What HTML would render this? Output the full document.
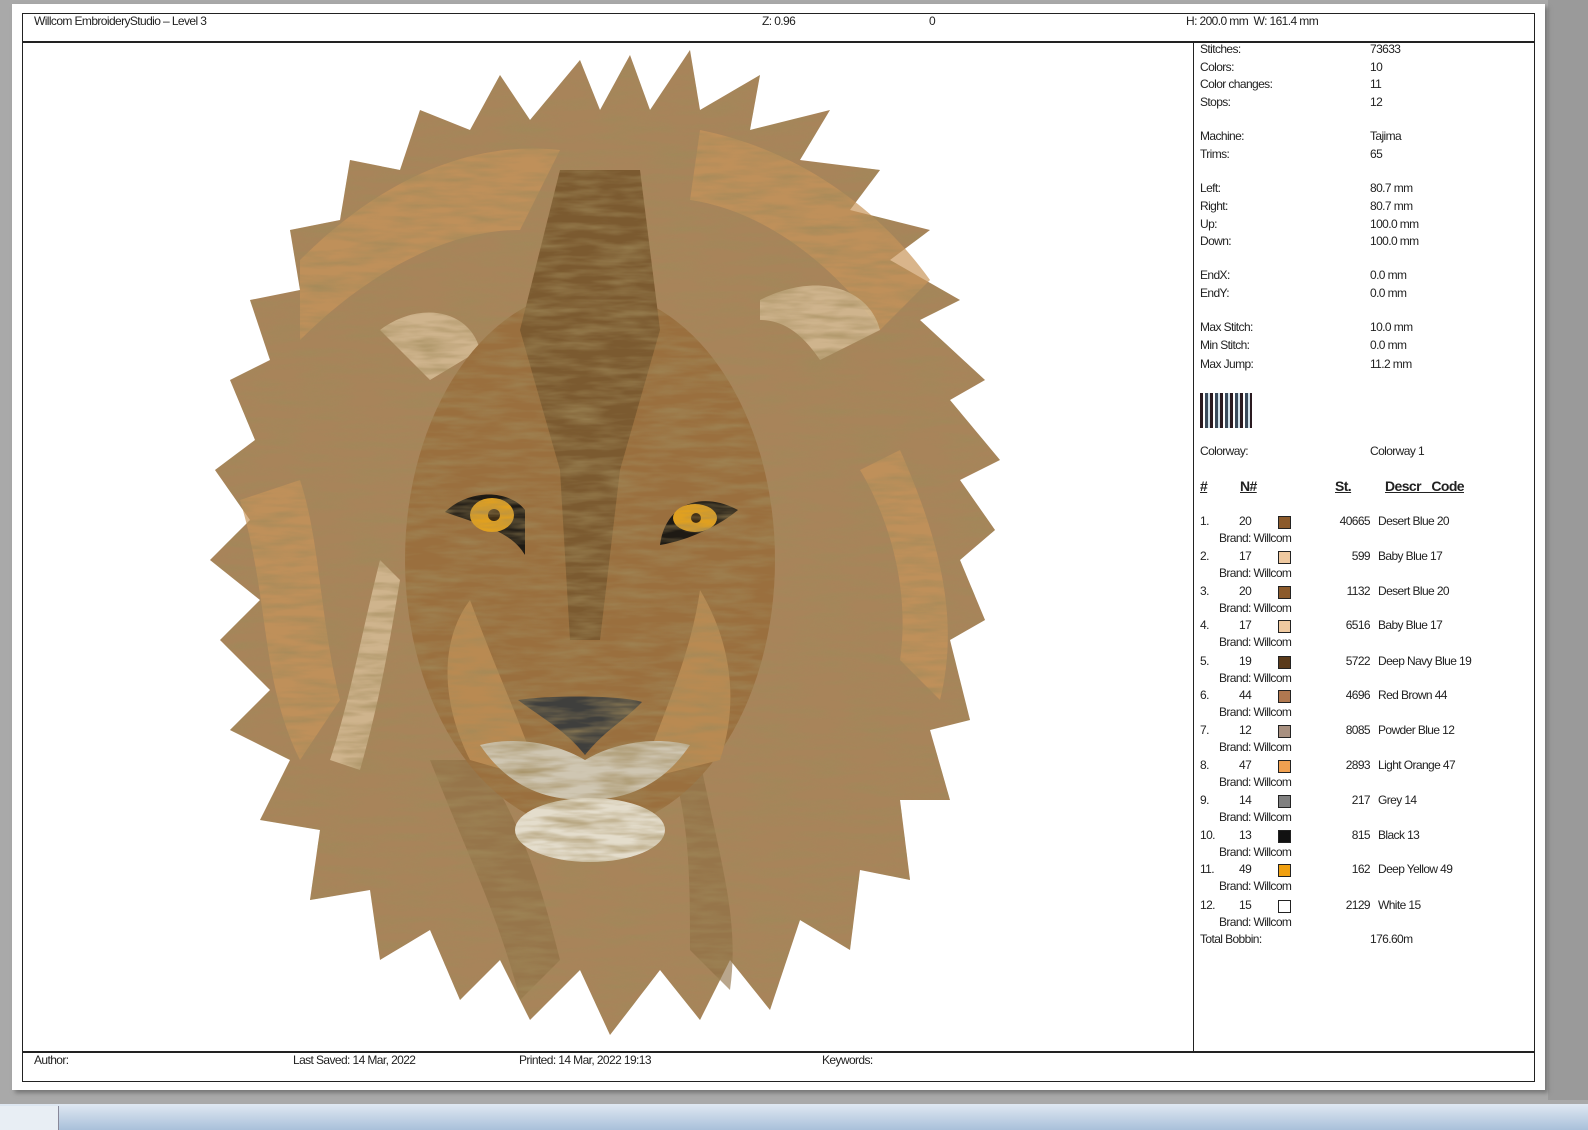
<!DOCTYPE html>
<html><head><style>
body{margin:0;width:1588px;height:1130px;background:#a9a9a9;position:relative;overflow:hidden;font-family:"Liberation Sans",sans-serif;font-size:12px;color:#222;letter-spacing:-0.6px}
.t{position:absolute;white-space:nowrap;line-height:14px}
.paper{position:absolute;left:12px;top:4px;width:1533px;height:1086px;background:#fff;box-shadow:3px 3px 4px #777}
.ln{position:absolute;background:#222}
.sw{position:absolute;width:11px;height:11px;border:1px solid #222}
</style></head><body>
<div style="position:absolute;left:1548px;top:0;width:40px;height:1100px;background:#9a9a9a"></div>
<div class="paper"></div>
<div style="position:absolute;left:0;top:1104px;width:1588px;height:26px;background:linear-gradient(#dfe8f2,#a9c0da)"></div>
<div style="position:absolute;left:0;top:1106px;width:58px;height:24px;background:#e8eef4;border-right:1px solid #889"></div>
<div style="position:absolute;left:22px;top:13px;width:1511px;height:1067px;border:1.5px solid #222"></div>
<div class="ln" style="left:22px;top:41px;width:1513px;height:1.5px"></div>
<div class="ln" style="left:22px;top:1051px;width:1513px;height:1.5px"></div>
<div class="ln" style="left:1193px;top:41px;width:1px;height:1011px"></div>

<div class="t" style="left:34px;top:14px">Willcom EmbroideryStudio – Level 3</div>
<div class="t" style="left:762px;top:14px">Z: 0.96</div>
<div class="t" style="left:929px;top:14px">0</div>
<div class="t" style="left:1186px;top:14px">H: 200.0 mm &nbsp;W: 161.4 mm</div>
<div class="t" style="left:34px;top:1053px">Author:</div>
<div class="t" style="left:293px;top:1053px">Last Saved: 14 Mar, 2022</div>
<div class="t" style="left:519px;top:1053px">Printed: 14 Mar, 2022 19:13</div>
<div class="t" style="left:822px;top:1053px">Keywords:</div>

<svg style="position:absolute;left:0;top:0" width="1190" height="1050">
<defs>
<filter id="tx"><feTurbulence type="fractalNoise" baseFrequency="0.02 0.12" numOctaves="3" seed="4"/><feColorMatrix values="0 0 0 0 0.35  0 0 0 0 0.25  0 0 0 0 0.1  0 0 0 1.4 -0.5"/><feComposite in2="SourceGraphic" operator="in"/></filter>
</defs>
<g>
<polygon fill="#a8845a" points="580,60 600,110 630,55 650,110 690,50 700,110 760,75 750,130 830,110 800,160 880,170 850,210 930,230 890,260 960,300 920,320 985,380 950,400 1000,460 960,480 995,530 960,560 985,620 950,640 970,720 930,730 950,800 900,800 910,880 860,870 850,950 800,920 770,1010 730,960 700,1020 660,970 610,1035 580,970 530,1020 500,960 460,1000 430,930 380,960 370,890 310,900 320,830 260,820 290,760 230,730 270,690 220,640 260,600 210,560 250,520 215,470 255,440 230,380 270,360 250,300 300,290 290,230 340,220 350,160 400,170 420,110 470,130 500,75 530,120"/>
<path fill="#c9955a" opacity=".7" d="M300,260 C380,180 470,140 560,150 L520,230 C440,230 360,280 300,340Z M700,130 C800,150 880,210 930,280 L880,330 C830,260 760,210 690,200Z M240,500 C270,600 260,680 300,760 L340,700 C320,620 320,540 300,480Z M900,450 C940,540 960,620 940,700 L900,660 C910,590 890,520 860,470Z"/>
<path fill="#d8c09a" opacity=".8" d="M380,330 C420,300 470,310 480,350 L430,380Z M760,300 C820,270 870,290 880,330 L820,360 C800,330 780,320 760,320Z M380,560 C360,640 350,700 330,760 L360,770 C380,700 390,640 400,580Z"/>
<path fill="#8a6a40" opacity=".6" d="M430,760 C470,860 500,920 520,1000 L560,960 C540,880 520,820 480,760Z M700,760 C720,860 740,920 730,990 L690,950 C690,880 690,820 670,760Z"/>
<ellipse cx="590" cy="560" rx="185" ry="270" fill="#9a6f3e"/>
<path fill="#7b5a30" d="M560,170 L640,170 L660,330 L620,470 L600,640 L570,640 L560,470 L520,330Z"/>
<path fill="#b98a52" d="M470,600 C500,680 520,720 540,780 L470,760 C440,700 440,640 470,600Z M700,590 C690,660 660,720 640,780 L720,760 C740,700 730,640 700,590Z"/>
<path fill="#cfc6b2" d="M480,745 C520,735 560,745 585,760 L585,800 C550,800 510,790 480,745Z M690,745 C650,735 610,745 585,760 L585,800 C620,800 660,790 690,745Z"/>
<ellipse cx="590" cy="830" rx="75" ry="32" fill="#e4ddcc"/>
<path fill="#3f3f3d" d="M518,700 C550,695 620,695 642,702 C625,720 605,730 585,755 C565,730 545,720 518,700Z"/>
<path fill="#1e1a14" d="M445,512 C470,488 510,490 525,510 L525,555 C510,530 480,525 445,512Z"/>
<ellipse cx="492" cy="515" rx="22" ry="17" fill="#e0a020"/>
<circle cx="494" cy="515" r="6" fill="#3a2810"/>
<path fill="#1e1a14" d="M660,545 C665,505 700,490 738,510 C720,525 690,540 660,545Z"/>
<ellipse cx="695" cy="518" rx="22" ry="14" fill="#e0a020"/>
<circle cx="696" cy="518" r="5" fill="#3a2810"/>
<polygon fill="#a37c4a" filter="url(#tx)" points="580,60 600,110 630,55 650,110 690,50 700,110 760,75 750,130 830,110 800,160 880,170 850,210 930,230 890,260 960,300 920,320 985,380 950,400 1000,460 960,480 995,530 960,560 985,620 950,640 970,720 930,730 950,800 900,800 910,880 860,870 850,950 800,920 770,1010 730,960 700,1020 660,970 610,1035 580,970 530,1020 500,960 460,1000 430,930 380,960 370,890 310,900 320,830 260,820 290,760 230,730 270,690 220,640 260,600 210,560 250,520 215,470 255,440 230,380 270,360 250,300 300,290 290,230 340,220 350,160 400,170 420,110 470,130 500,75 530,120"/>
</g>
</svg>

<div class="t" style="left:1200px;top:42px">Stitches:</div><div class="t" style="left:1370px;top:42px">73633</div>
<div class="t" style="left:1200px;top:60px">Colors:</div><div class="t" style="left:1370px;top:60px">10</div>
<div class="t" style="left:1200px;top:77px">Color changes:</div><div class="t" style="left:1370px;top:77px">11</div>
<div class="t" style="left:1200px;top:95px">Stops:</div><div class="t" style="left:1370px;top:95px">12</div>
<div class="t" style="left:1200px;top:129px">Machine:</div><div class="t" style="left:1370px;top:129px">Tajima</div>
<div class="t" style="left:1200px;top:147px">Trims:</div><div class="t" style="left:1370px;top:147px">65</div>
<div class="t" style="left:1200px;top:181px">Left:</div><div class="t" style="left:1370px;top:181px">80.7 mm</div>
<div class="t" style="left:1200px;top:199px">Right:</div><div class="t" style="left:1370px;top:199px">80.7 mm</div>
<div class="t" style="left:1200px;top:217px">Up:</div><div class="t" style="left:1370px;top:217px">100.0 mm</div>
<div class="t" style="left:1200px;top:234px">Down:</div><div class="t" style="left:1370px;top:234px">100.0 mm</div>
<div class="t" style="left:1200px;top:268px">EndX:</div><div class="t" style="left:1370px;top:268px">0.0 mm</div>
<div class="t" style="left:1200px;top:286px">EndY:</div><div class="t" style="left:1370px;top:286px">0.0 mm</div>
<div class="t" style="left:1200px;top:320px">Max Stitch:</div><div class="t" style="left:1370px;top:320px">10.0 mm</div>
<div class="t" style="left:1200px;top:338px">Min Stitch:</div><div class="t" style="left:1370px;top:338px">0.0 mm</div>
<div class="t" style="left:1200px;top:357px">Max Jump:</div><div class="t" style="left:1370px;top:357px">11.2 mm</div>
<div style="position:absolute;left:1200px;top:393px;width:52px;height:35px;background:repeating-linear-gradient(90deg,#2a1a20 0 3px,#fff 3px 5px,#3a4a5a 5px 8px,#cfe0ea 8px 10px)"></div>
<div class="t" style="left:1200px;top:444px">Colorway:</div><div class="t" style="left:1370px;top:444px">Colorway 1</div>
<div class="t" style="left:1200px;top:479px;font-size:14px;font-weight:bold;text-decoration:underline">#</div>
<div class="t" style="left:1240px;top:479px;font-size:14px;font-weight:bold;text-decoration:underline">N#</div>
<div class="t" style="left:1335px;top:479px;font-size:14px;font-weight:bold;text-decoration:underline">St.</div>
<div class="t" style="left:1385px;top:479px;font-size:14px;font-weight:bold;text-decoration:underline">Descr _Code</div>
<div id="rows"></div>
<script>
var d=[["1.","20","#8b5a2b","40665","Desert Blue 20",520],["2.","17","#efc9a0","599","Baby Blue 17",555],["3.","20","#8b5a2b","1132","Desert Blue 20",590],["4.","17","#efc9a0","6516","Baby Blue 17",624],["5.","19","#5a3a1a","5722","Deep Navy Blue 19",660],["6.","44","#b07850","4696","Red Brown 44",694],["7.","12","#a89080","8085","Powder Blue 12",729],["8.","47","#f0a050","2893","Light Orange 47",764],["9.","14","#808080","217","Grey 14",799],["10.","13","#111","815","Black 13",834],["11.","49","#f0a010","162","Deep Yellow 49",868],["12.","15","#fff","2129","White 15",904]];
var h="";d.forEach(function(r){var y=r[5]-6;h+='<div class="t" style="left:1200px;top:'+y+'px">'+r[0]+'</div><div class="t" style="left:1239px;top:'+y+'px">'+r[1]+'</div><div class="sw" style="left:1278px;top:'+(y+2)+'px;background:'+r[2]+'"></div><div class="t" style="left:1320px;top:'+y+'px;width:50px;text-align:right">'+r[3]+'</div><div class="t" style="left:1378px;top:'+y+'px">'+r[4]+'</div><div class="t" style="left:1219px;top:'+(y+17)+'px">Brand: Willcom</div>';});
h+='<div class="t" style="left:1200px;top:932px">Total Bobbin:</div><div class="t" style="left:1370px;top:932px">176.60m</div>';
document.getElementById("rows").innerHTML=h;
</script>
</body></html>
